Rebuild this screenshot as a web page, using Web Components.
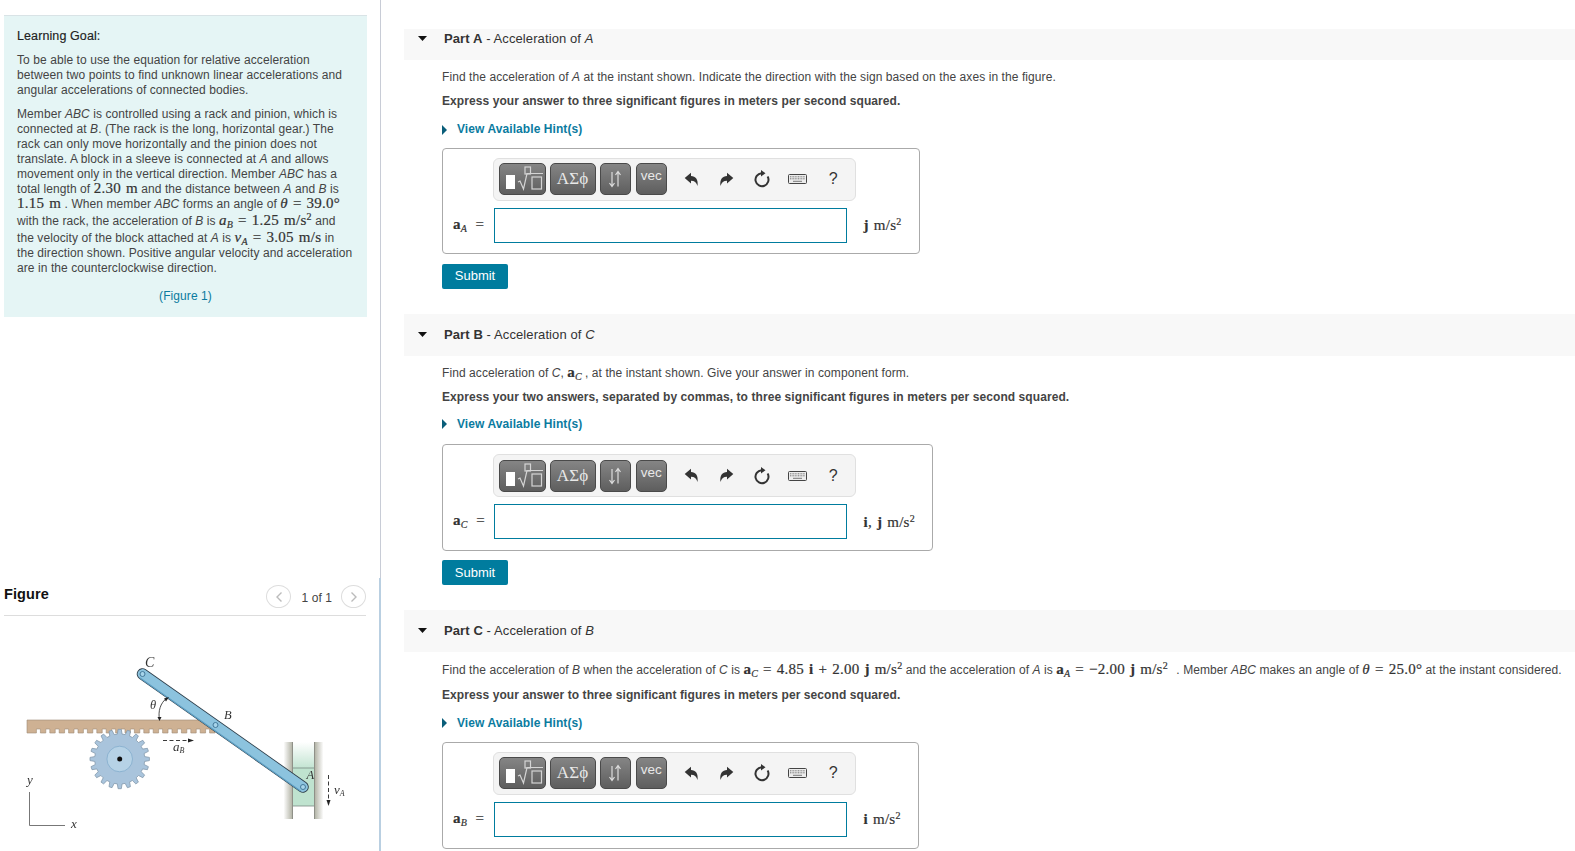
<!DOCTYPE html>
<html lang="en">
<head>
<meta charset="utf-8">
<title>Relative acceleration</title>
<style>
html,body{margin:0;padding:0;height:851px;overflow:hidden;background:#fff}
body{font:12px/15px "Liberation Sans",Arial,sans-serif;color:#444;letter-spacing:.08px}
</style>
</head>
<body>
<mp-app>
  <goal-box slot="left">
    <span slot="title">Learning Goal:</span>
    <p>To be able to use the equation for relative acceleration between two points to find unknown linear accelerations and angular accelerations of connected bodies.</p>
    <p>Member <i>ABC</i> is controlled using a rack and pinion, which is connected at <i>B</i>. (The rack is the long, horizontal gear.) The rack can only move horizontally and the pinion does not translate. A block in a sleeve is connected at <i>A</i> and allows movement only in the vertical direction. Member <i>ABC</i> has a total length of <ma-th>2.30 m</ma-th> and the distance between <i>A</i> and <i>B</i> is <ma-th>1.15 m</ma-th> . When member <i>ABC</i> forms an angle of <ma-th><i>θ</i> = 39.0°</ma-th> with the rack, the acceleration of <i>B</i> is <ma-th lh="a"><i>a</i><sub><i>B</i></sub> = 1.25 m/s<sup>2</sup></ma-th> and the velocity of the block attached at <i>A</i> is <ma-th lh="b"><i>v</i><sub><i>A</i></sub> = 3.05 m/s</ma-th> in the direction shown. Positive angular velocity and acceleration are in the counterclockwise direction.</p>
    <span slot="link">(Figure 1)</span>
  </goal-box>
  <figure-panel slot="figure"></figure-panel>

  <mp-part first>
    <span slot="title"><b>Part A</b> - Acceleration of <i>A</i></span>
    <span slot="q">Find the acceleration of <i>A</i> at the instant shown. Indicate the direction with the sign based on the axes in the figure.</span>
    <span slot="ins">Express your answer to three significant figures in meters per second squared.</span>
    <answer-box>
      <ma-th slot="label"><b>a</b><sub><i>A</i></sub> =</ma-th>
      <ma-th slot="unit"><b>j</b> m/s<sup>2</sup></ma-th>
    </answer-box>
  </mp-part>

  <mp-part mid>
    <span slot="title"><b>Part B</b> - Acceleration of <i>C</i></span>
    <span slot="q">Find acceleration of <i>C</i>, <ma-th style="margin-right:3px"><b>a</b><sub><i>C</i></sub></ma-th>, at the instant shown. Give your answer in component form.</span>
    <span slot="ins">Express your two answers, separated by commas, to three significant figures in meters per second squared.</span>
    <answer-box>
      <ma-th slot="label"><b>a</b><sub><i>C</i></sub> =</ma-th>
      <ma-th slot="unit"><b>i</b>, <b>j</b> m/s<sup>2</sup></ma-th>
    </answer-box>
  </mp-part>

  <mp-part tall nosubmit>
    <span slot="title"><b>Part C</b> - Acceleration of <i>B</i></span>
    <span slot="q">Find the acceleration of <i>B</i> when the acceleration of <i>C</i> is <ma-th><b>a</b><sub><i>C</i></sub> = 4.85 <b>i</b> + 2.00 <b>j</b> m/s<sup>2</sup></ma-th> and the acceleration of <i>A</i> is <ma-th style="margin-right:5px"><b>a</b><sub><i>A</i></sub> = −2.00 <b>j</b> m/s<sup>2</sup></ma-th> . Member <i>ABC</i> makes an angle of <ma-th><i>θ</i> = 25.0°</ma-th> at the instant considered.</span>
    <span slot="ins">Express your answer to three significant figures in meters per second squared.</span>
    <answer-box>
      <ma-th slot="label"><b>a</b><sub><i>B</i></sub> =</ma-th>
      <ma-th slot="unit"><b>i</b> m/s<sup>2</sup></ma-th>
    </answer-box>
  </mp-part>
</mp-app>

<script>
function shadow(el, html){ el.attachShadow({mode:'open'}).innerHTML = html; }

customElements.define('mp-app', class extends HTMLElement{
  constructor(){ super(); shadow(this, `<style>
    :host{display:grid;grid-template-columns:381px 1fr;height:851px;overflow:hidden}
    .left{display:flex;flex-direction:column;height:851px}
    .top{box-sizing:border-box;height:578px;padding:15px 0 0 4px;border-right:1px solid #c8ccd6;margin-right:0}
    .bottom{box-sizing:border-box;flex:1;padding-left:4px;border-right:2px solid #b9cfe1}
    .right{padding:29px 0 0 23px;min-width:0}
  </style>
  <div class="left"><div class="top"><slot name="left"></slot></div><div class="bottom"><slot name="figure"></slot></div></div>
  <div class="right"><slot></slot></div>`); }
});

customElements.define('goal-box', class extends HTMLElement{
  constructor(){ super(); shadow(this, `<style>
    :host{display:block;box-sizing:border-box;width:363px;height:302px;background:#e5f5f5;border-top:1px solid #d9e3e6;padding:13px 13px 0 13px}
    .t{font-size:12.5px;color:#222;line-height:15px;margin-bottom:9px;letter-spacing:.1px;-webkit-text-stroke:.15px #222}
    ::slotted(p){margin:0 0 9px;color:#444}
    .l{text-align:center;color:#0b7b9f;margin-top:13.5px}
  </style><div class="t"><slot name="title"></slot></div><slot></slot><div class="l"><slot name="link"></slot></div>`); }
});

customElements.define('ma-th', class extends HTMLElement{
  constructor(){ super(); shadow(this, `<style>
    :host{display:inline;font-family:"Liberation Serif","Times New Roman",serif;font-size:15px;line-height:13px;letter-spacing:.25px;word-spacing:1px;color:#333;font-weight:400;white-space:nowrap;-webkit-text-stroke:.2px #333}
    :host([lh=a]){line-height:17.8px}
    :host([lh=b]){line-height:14.2px}
    :host([slot=label]){word-spacing:4.5px}
    ::slotted(sub){font-size:10px;line-height:0;vertical-align:-3px}
    ::slotted(sup){font-size:10px;line-height:0;vertical-align:5px}
  </style><slot></slot>`); }
});

customElements.define('figure-panel', class extends HTMLElement{
  constructor(){ super();
    // rack with notches along its lower edge
    let rack = 'M27 720H215V733', x = 215;
    const end = 27;
    while(x-9.4 > end+2){ rack += `H${(x-5.4).toFixed(1)}V729H${(x-9.4).toFixed(1)}V733`; x -= 9.4; }
    rack += `H${end}V720Z`;
    // gear outline
    let gear = ''; const cx=119.7, cy=759, n=20;
    for(let i=0;i<n;i++){
      const a=i*2*Math.PI/n, s=2*Math.PI/n;
      const p=(r,t)=>`${(cx+r*Math.cos(t)).toFixed(1)} ${(cy+r*Math.sin(t)).toFixed(1)}`;
      gear += (i?'L':'M')+p(25,a-s*.3)+'L'+p(29.7,a-s*.17)+'L'+p(29.7,a+s*.17)+'L'+p(25,a+s*.3);
    }
    gear += 'Z';
    shadow(this, `<style>
    :host{display:block;width:362px}
    header{display:flex;align-items:center;height:37px;border-bottom:1px solid #ddd;box-sizing:content-box;padding-top:0}
    h2{margin:0 auto 5px 0;font:700 14.5px/16px "Liberation Sans",Arial,sans-serif;color:#111}
    .pg{width:25px;height:23px;border:1px solid #ddd;border-radius:50%;box-sizing:border-box;display:flex;align-items:center;justify-content:center;margin-top:0;flex:none}
    .n{margin:3px 9px 0 10px;color:#444}
    svg.fig{display:block;width:375px;height:235px;max-width:none}
    text{font-family:"Liberation Serif",serif;font-style:italic;fill:#333}
    </style>
    <header><h2>Figure</h2>
      <span class="pg"><svg width="8" height="12" viewBox="0 0 8 12"><path d="M6.5 1.5 2 6l4.5 4.5" fill="none" stroke="#bbb" stroke-width="1.4"/></svg></span>
      <span class="n">1 of 1</span>
      <span class="pg"><svg width="8" height="12" viewBox="0 0 8 12"><path d="M1.5 1.5 6 6l-4.5 4.5" fill="none" stroke="#bbb" stroke-width="1.4"/></svg></span>
    </header>
    <svg class="fig" viewBox="4 616 375 235" role="img" aria-label="Rack and pinion figure">
      <defs>
        <filter id="b" x="-5%" y="-5%" width="110%" height="110%"><feGaussianBlur stdDeviation=".45"/></filter>
        <linearGradient id="wl" x1="0" x2="1"><stop offset="0" stop-color="#fff"/><stop offset="1" stop-color="#b0b1a3"/></linearGradient>
        <linearGradient id="wr" x1="1" x2="0"><stop offset="0" stop-color="#fff"/><stop offset="1" stop-color="#b0b1a3"/></linearGradient>
        <linearGradient id="gf" x1="0" x2="0" y1="0" y2="1"><stop offset="0" stop-color="#fff"/><stop offset="1" stop-color="#c3e4d2"/></linearGradient>
      </defs>
      <g filter="url(#b)">
        <path d="${rack}" fill="#ceb193" stroke="#a08c76" stroke-width=".6"/>
        <path d="${gear}" fill="#a9c4dc" stroke="#8499ac" stroke-width=".8"/>
        <circle cx="119.7" cy="759" r="12.8" fill="#b6d2e6" stroke="#8cb3d1" stroke-width="1"/>
        <circle cx="119.7" cy="759" r="2.5" fill="#111"/>
        <rect x="283.500" y="742" width="9" height="77" fill="url(#wl)"/>
        <rect x="314.500" y="742" width="9" height="77" fill="url(#wr)"/>
        <rect x="292.500" y="742" width="22" height="26" fill="url(#gf)"/>
        <rect x="292.500" y="768" width="22" height="38" fill="#bfe3cf" stroke="#7b8b83" stroke-width=".8"/>
        <path d="M292.500 742V819M314.500 742V819" stroke="#8f9088" stroke-width="1"/>
        <path d="M142.500 674 303 787" stroke="#2f3f4b" stroke-width="11.500" stroke-linecap="round"/>
        <path d="M142.500 674 303 787" stroke="#8cc3de" stroke-width="9.800" stroke-linecap="round"/>
        <path d="M140 678 300.500 791" stroke="#5b9cc0" stroke-width="1.200"/>
        <g fill="#a6d4ea" stroke="#44799a" stroke-width="1"><circle cx="142.500" cy="674" r="2.500"/><circle cx="215.500" cy="725" r="2.500"/><circle cx="303" cy="787" r="2.500"/></g>
        <path d="M167 698C160 703 158 712 159.500 719" fill="none" stroke="#222" stroke-width=".8"/>
        <path d="M169 697 164 698.500 166 701.500ZM159.500 721 157.500 717 161.500 717Z" fill="#222"/>
        <path d="M163 740.500H190" stroke="#222" stroke-width=".9" stroke-dasharray="4 2.500"/>
        <path d="M194 740.500 188 738.500V742.500Z" fill="#222"/>
        <path d="M328.500 775V802" stroke="#222" stroke-width=".9" stroke-dasharray="4 2.500"/>
        <path d="M328.500 806 326.500 800H330.500Z" fill="#222"/>
        <path d="M29.500 792V825.500H65" fill="none" stroke="#777" stroke-width="1"/>
        <text x="145" y="667" font-size="14">C</text>
        <text x="224" y="719" font-size="12.500">B</text>
        <text x="306.500" y="779" font-size="12.500">A</text>
        <text x="150" y="709" font-size="12.500">θ</text>
        <text x="173" y="751" font-size="13">a<tspan font-size="8" dy="2">B</tspan></text>
        <text x="334" y="794" font-size="13">v<tspan font-size="8" dy="2">A</tspan></text>
        <text x="27" y="784" font-size="13">y</text>
        <text x="71" y="828" font-size="13">x</text>
      </g>
    </svg>`); }
});

customElements.define('mp-part', class extends HTMLElement{
  constructor(){ super(); shadow(this, `<style>
    :host{display:block}
    .hd{display:flex;align-items:flex-start;background:#f8f8f8;height:42px;box-sizing:border-box;padding:13px 0 0 14px}
    :host([first]) .hd{height:31px;padding-top:2px}
    .hd svg{margin-top:5px;flex:none}
    .tt{margin-left:17px;font-size:13px;line-height:16px;color:#333;letter-spacing:.1px}
    .bd{padding:9.500px 0 25px 38px}
    :host([mid]) .bd{padding-top:10.500px}
    .q{line-height:15px;white-space:nowrap}
    :host([tall]) .q{line-height:17px}
    .i{font-weight:700;margin-top:9px;color:#444}
    .h{display:flex;align-items:center;margin-top:11.500px;color:#0b7b9f;font-weight:700}
    :host([first]) .h{margin-top:13.500px}
    :host([tall]) .h{margin-top:13px}
    .h svg{margin-right:10px}
    .sl{margin-top:12.500px}
    :host([first]) .sl{margin-top:10.500px}
    :host([tall]) .sl{margin-top:11px}
    button{display:block;margin-top:9.500px;width:66px;height:25px;padding:0;border:0;border-radius:2px;background:#007c9e;color:#fff;font:13px/24px "Liberation Sans",Arial,sans-serif}
    :host([nosubmit]) button{display:none}
  </style>
  <div class="hd"><svg width="9" height="5" viewBox="0 0 9 5"><path d="M0 0h9L4.500 5z" fill="#111"/></svg><div class="tt"><slot name="title"></slot></div></div>
  <div class="bd">
    <div class="q"><slot name="q"></slot></div>
    <div class="i"><slot name="ins"></slot></div>
    <div class="h"><svg width="5" height="10" viewBox="0 0 5 10"><path d="M0 0 5 5 0 10z" fill="#0a5e7a"/></svg>View Available Hint(s)</div>
    <div class="sl"><slot></slot></div>
    <button>Submit</button>
  </div>`); }
});

customElements.define('math-toolbar', class extends HTMLElement{
  constructor(){ super(); shadow(this, `<style>
    :host{display:flex;align-items:center;box-sizing:border-box;width:362.500px;height:43px;padding:0 0 0 5px;margin-left:-1px;background:#f4f4f4;border:1px solid #e0e0e0;border-radius:6px}
    .b{box-sizing:border-box;height:32px;flex:none;display:flex;align-items:center;justify-content:center;border:1px solid #4a4a4a;border-radius:5px;background:linear-gradient(#858585,#5e5e5e);color:#e8e8e8;margin-right:3.500px}
    .b1{width:47px}.b2{width:46px;margin-right:4px;font:17px "Liberation Serif",serif}.b3{width:31.500px;margin-right:4.500px}.b4{width:31.500px;align-items:flex-start;font:13.500px/24px "Liberation Sans",sans-serif;margin-right:6.500px}
    .c{width:35.500px;flex:none;display:flex;justify-content:center;align-items:center}
    .q{font:16px "Liberation Sans",sans-serif;color:#333}
  </style>
  <span class="b b1"><svg width="42" height="26" viewBox="0 0 42 26"><rect x="4" y="9" width="9" height="14" fill="#fff"/><rect x="23" y="1" width="5.500" height="7" fill="none" stroke="#d4d4d4" stroke-width="1.200"/><path d="M16 16l2-1 3.500 8L25 7.500H41" fill="none" stroke="#d4d4d4" stroke-width="1.200"/><rect x="30" y="11" width="9.500" height="12" fill="none" stroke="#d4d4d4" stroke-width="1.200"/></svg></span>
  <span class="b b2">ΑΣϕ</span>
  <span class="b b3"><svg width="16" height="18" viewBox="0 0 16 18"><path d="M5 2V16M2.500 13 5 16.500 7.500 13M11 16.500V2M8.500 5 11 1.500 13.500 5" fill="none" stroke="#ddd" stroke-width="1.200"/></svg></span>
  <span class="b b4">vec</span>
  <span class="c"><svg width="15" height="15" viewBox="0 0 15 15"><path d="M.7 6 7 .8V4C11.500 4 14.500 7.500 13.500 14 12.500 10.500 10.500 8.700 7 8.700V11.500Z" fill="#333"/></svg></span>
  <span class="c"><svg width="15" height="15" viewBox="0 0 15 15"><path d="M14.300 6 8 .8V4C3.500 4 .5 7.500 1.500 14 2.500 10.500 4.500 8.700 8 8.700V11.500Z" fill="#333"/></svg></span>
  <span class="c"><svg width="16" height="18" viewBox="0 0 16 18"><path d="M7.500 3.200A6.500 6.500 0 1 0 13.600 6.400" fill="none" stroke="#333" stroke-width="2"/><path d="M7 0V6.500L11.500 3.200Z" fill="#333"/></svg></span>
  <span class="c"><svg width="19" height="10" viewBox="0 0 19 10"><rect x=".5" y=".5" width="18" height="9" rx="1" fill="#ececec" stroke="#444"/><path d="M2 2.800h15M2 4.800h15" stroke="#777" stroke-dasharray="1 .6"/><path d="M5 7.300h9" stroke="#777"/></svg></span>
  <span class="c q">?</span>`); }
});

customElements.define('answer-box', class extends HTMLElement{
  constructor(){ super(); shadow(this, `<style>
    :host{display:block;width:fit-content;box-sizing:border-box;border:1px solid #aaa;border-radius:4px;padding:9px 17px 10.700px 10px;background:#fff}
    .g{display:grid;grid-template-columns:41px 352.600px auto;row-gap:7px;align-items:center}
    .tb{grid-column:2/4}
    .lb{white-space:nowrap}
    .in{box-sizing:border-box;height:35px;border:1px solid #007c9e;background:#fff}
    .u{margin:3px 0 0 17px;white-space:nowrap}
  </style>
  <div class="g">
    <math-toolbar class="tb"></math-toolbar>
    <div class="lb"><slot name="label"></slot></div>
    <div class="in"></div>
    <div class="u"><slot name="unit"></slot></div>
  </div>`); }
});
</script>
</body>
</html>
